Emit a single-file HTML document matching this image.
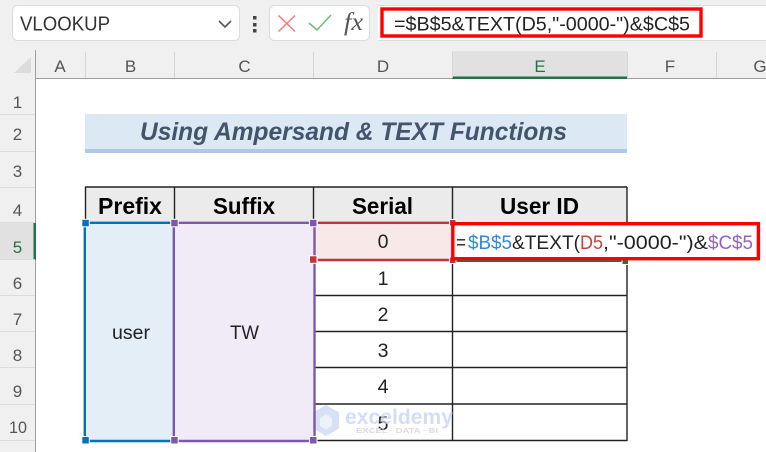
<!DOCTYPE html>
<html><head><meta charset="utf-8"><style>
html,body{margin:0;padding:0;background:#fff}
svg{display:block}
text{font-family:"Liberation Sans",sans-serif;fill:#222}
</style></head><body>
<svg width="766" height="452" viewBox="0 0 766 452" xmlns="http://www.w3.org/2000/svg" style="width:766px;height:452px;overflow:hidden">
<!-- Top chrome -->
<rect width="766" height="452" fill="#fff"/>
<rect width="766" height="50" fill="#f0f0f0"/>
<rect x="0" y="50" width="36" height="402" fill="#f0f0f0"/>
<rect x="36" y="50" width="730" height="28" fill="#f0f0f0"/>
<rect x="12.5" y="5.5" width="227" height="35" rx="5" fill="#fff" stroke="#dcdcdc"/>
<text x="20" y="30.500" font-size="20" textLength="90" lengthAdjust="spacingAndGlyphs" style="fill:#333">VLOOKUP</text>
<path d="M219 21l6 6 6-6" fill="none" stroke="#555" stroke-width="1.6"/>
<rect x="253" y="16" width="3.500" height="3.500" fill="#444"/><rect x="253" y="23" width="3.500" height="3.500" fill="#444"/><rect x="253" y="29" width="3.500" height="3.500" fill="#444"/>
<rect x="269.500" y="5.500" width="100" height="35" rx="5" fill="#fff" stroke="#dcdcdc"/>
<path d="M278.500 15.500l16.500 16M295 15.500l-16.500 16" stroke="#f47a7a" stroke-width="1.500" fill="none"/>
<path d="M309 23l8 7 14-15" stroke="#6cba7c" stroke-width="1.500" fill="none"/>
<text x="344" y="30" font-size="25" textLength="19" lengthAdjust="spacingAndGlyphs" font-style="italic" style="font-family:'Liberation Serif',serif;fill:#555">fx</text>
<rect x="378" y="5" width="388" height="36" fill="#fff"/>
<path d="M378 5.500H766M378 40.500H766" stroke="#dcdcdc"/>
<rect x="382" y="9" width="319" height="27" fill="#fff" stroke="#f00" stroke-width="3.400"/>
<text x="394" y="30.500" font-size="19.500" textLength="296" lengthAdjust="spacingAndGlyphs">=$B$5&amp;TEXT(D5,"-0000-")&amp;$C$5</text>

<!-- Column headers -->
<path d="M14 73 L31 73 L31 57 Z" fill="#dcdcdc"/>
<rect x="452" y="51" width="175" height="27" fill="#e1e1e1"/>
<rect x="452" y="76.500" width="175" height="2.500" fill="#217346"/>
<path d="M85.500 52V78M174.500 52V78M313.500 52V78M452.500 52V78M627.500 52V78M716.500 52V78" stroke="#d6d6d6"/>
<path d="M36 78.500H452M627 78.500H766" stroke="#9f9f9f"/>
<path d="M35.500 50V452" stroke="#9f9f9f"/>
<g font-size="17" text-anchor="middle">
<text x="60" y="72" style="fill:#555">A</text><text x="130.500" y="72" style="fill:#555">B</text><text x="244.500" y="72" style="fill:#555">C</text><text x="383" y="72" style="fill:#555">D</text><text x="540" y="72" style="fill:#217346">E</text><text x="670" y="72" style="fill:#555">F</text><text x="760" y="72" style="fill:#555">G</text>
</g>

<!-- Row headers -->
<rect x="0" y="223" width="35" height="37" fill="#e1e1e1"/>
<rect x="33.500" y="223" width="2.500" height="37" fill="#217346"/>
<path d="M0 114.500H35M0 151.500H35M0 187.500H35M0 222.500H35M0 259.500H35M0 295.500H35M0 331.500H35M0 367.500H35M0 404.500H35M0 440.500H35" stroke="#dcdcdc"/>
<g font-size="17" text-anchor="middle">
<text x="17.500" y="108" style="fill:#555">1</text><text x="17.500" y="140" style="fill:#555">2</text><text x="17.500" y="177" style="fill:#555">3</text><text x="17.500" y="216" style="fill:#555">4</text><text x="17.500" y="253" style="fill:#217346">5</text><text x="17.500" y="289" style="fill:#555">6</text><text x="17.500" y="325" style="fill:#555">7</text><text x="17.500" y="361" style="fill:#555">8</text><text x="17.500" y="397" style="fill:#555">9</text><text x="18" y="433" textLength="18" lengthAdjust="spacingAndGlyphs" style="fill:#555">10</text>
</g>

<!-- Title -->
<rect x="85" y="114" width="542" height="35" fill="#dce9f5"/>
<rect x="85" y="149" width="542" height="4" fill="#acc9e6"/>
<text x="140" y="140" font-size="25" font-weight="bold" font-style="italic" textLength="427" lengthAdjust="spacingAndGlyphs" style="fill:#44546a">Using Ampersand &amp; TEXT Functions</text>

<!-- Table -->
<rect x="85" y="187" width="542" height="36" fill="#ebebeb"/>
<rect x="85" y="223" width="89" height="217" fill="#e3eef7"/>
<rect x="174" y="223" width="139" height="217" fill="#f1ebf7"/>
<rect x="313" y="223" width="139" height="37" fill="#f8e8e8"/>
<path d="M85 187H627M627 187V441M452.500 187V441M313.500 187V223M174.500 187V223M85.500 187V223" stroke="#222" stroke-width="1.400" fill="none"/>
<path d="M314 295.500H627M314 331.500H627M314 367.500H627M314 404H627M314 440.500H627M452 259.500H627" stroke="#222" stroke-width="1.400" fill="none"/>

<g font-weight="bold" text-anchor="middle" font-size="23">
<text x="130" y="214" textLength="64" lengthAdjust="spacingAndGlyphs" style="fill:#000">Prefix</text>
<text x="244" y="214" textLength="62" lengthAdjust="spacingAndGlyphs" style="fill:#000">Suffix</text>
<text x="382.500" y="214" textLength="61" lengthAdjust="spacingAndGlyphs" style="fill:#000">Serial</text>
<text x="539.500" y="214" textLength="79" lengthAdjust="spacingAndGlyphs" style="fill:#000">User ID</text>
</g>
<g font-size="19.500" text-anchor="middle">
<text x="131" y="339" textLength="38" lengthAdjust="spacingAndGlyphs">user</text>
<text x="244.500" y="339" textLength="29" lengthAdjust="spacingAndGlyphs">TW</text>
<text x="383" y="248">0</text><text x="383" y="285">1</text><text x="383" y="321">2</text><text x="383" y="357">3</text><text x="383" y="393">4</text><text x="383" y="430">5</text>
</g>

<!-- Watermark -->
<g opacity="0.75">
<path d="M326 405l13 7.500v16l-13 7.500-13-7.500v-16z" fill="#c9d8f2"/>
<path d="M326 414l6 4v8l-6 3.500-6-3.500v-8z" fill="#e8eef9"/>
<text x="345" y="424" font-size="21" font-weight="bold" textLength="108" lengthAdjust="spacingAndGlyphs" style="fill:#c4d3f5">exceldemy</text>
<text x="356" y="433" font-size="7.500" font-weight="bold" textLength="82" lengthAdjust="spacingAndGlyphs" style="fill:#d0d0d0">EXCEL · DATA · BI</text>
</g>

<!-- Selection: blue B5:B10 -->
<path d="M85 222.800H174M84.800 223V441M85 441H174" stroke="#0070c0" stroke-width="2.400" fill="none"/>
<!-- purple C5:C10 -->
<path d="M174 222.800H313M173.800 223V441M174 441H313M314.500 223V441" stroke="#7f57ad" stroke-width="2.400" fill="none"/>
<!-- red D5 -->
<path d="M318 222.800H452M318 260H452" stroke="#c0343c" stroke-width="2.400" fill="none"/>
<path d="M456 261H623" stroke="#217346" stroke-width="2" fill="none"/>

<!-- handles -->
<g stroke="#fff" stroke-width="1">
<rect x="81.800" y="219.300" width="7.500" height="7.500" fill="#0070c0"/>
<rect x="81.800" y="436.500" width="7.500" height="7.500" fill="#0070c0"/>
<rect x="170.700" y="219.300" width="7.500" height="7.500" fill="#7f57ad"/>
<rect x="170.700" y="436.500" width="7.500" height="7.500" fill="#7f57ad"/>
<rect x="309.500" y="219.300" width="7.500" height="7.500" fill="#7f57ad"/>
<rect x="309.500" y="436.500" width="7.500" height="7.500" fill="#7f57ad"/>
<rect x="309.500" y="255.800" width="7.500" height="7.500" fill="#c0343c"/>
<rect x="449.500" y="219.500" width="6.500" height="6.500" fill="#c0343c"/>
<rect x="449.500" y="257" width="6.500" height="6.500" fill="#c0343c"/>
<rect x="622" y="258" width="6.500" height="6.500" fill="#217346"/>
</g>

<!-- Formula cell -->
<rect x="452.800" y="223.700" width="305.600" height="35" fill="#fff" stroke="#f00" stroke-width="3.400"/>
<g font-size="19.500">
<text x="456" y="249" textLength="10" lengthAdjust="spacingAndGlyphs">=</text>
<text x="468" y="249" textLength="44" lengthAdjust="spacingAndGlyphs" style="fill:#2e8ad8">$B$5</text>
<text x="512" y="249" textLength="68" lengthAdjust="spacingAndGlyphs">&amp;TEXT(</text>
<text x="580" y="249" textLength="23" lengthAdjust="spacingAndGlyphs" style="fill:#c8433f">D5</text>
<text x="603" y="249" textLength="105" lengthAdjust="spacingAndGlyphs">,"-0000-")&amp;</text>
<text x="708" y="249" textLength="45" lengthAdjust="spacingAndGlyphs" style="fill:#9462c4">$C$5</text>
</g>
</svg>
</body></html>
